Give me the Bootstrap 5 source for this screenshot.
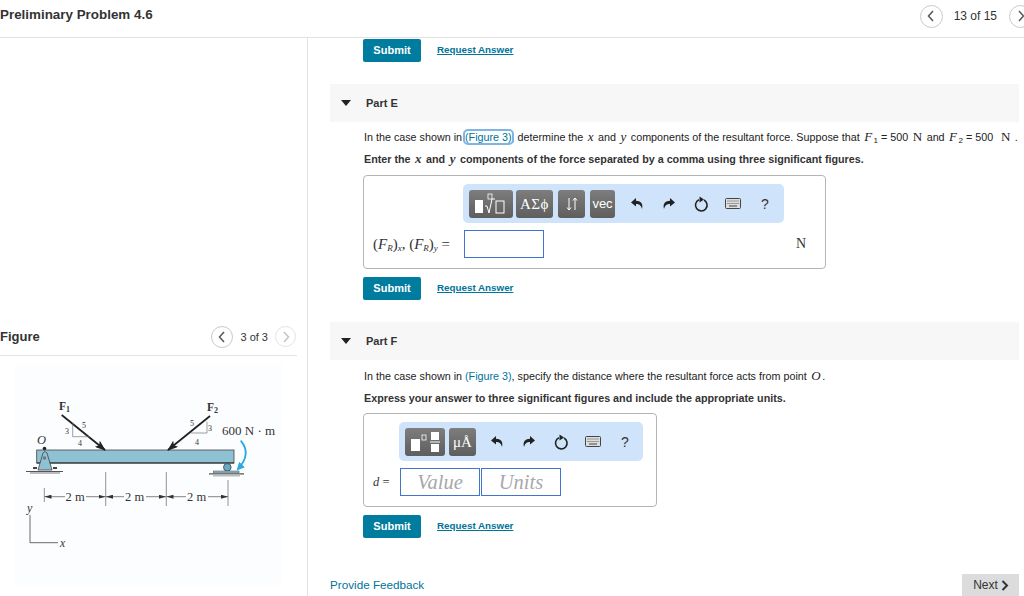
<!DOCTYPE html>
<html lang="en"><head><meta charset="utf-8"><title>Preliminary Problem 4.6</title>
<link href="https://cdn.jsdelivr.net/npm/bootstrap@5.3.0/dist/css/bootstrap.min.css" rel="stylesheet">
<script src="https://cdn.jsdelivr.net/npm/bootstrap@5.3.0/dist/js/bootstrap.bundle.min.js"></script>
<style>
html,body{height:596px;overflow:hidden;background:#fff}
body{font-family:"Liberation Sans",Arial,sans-serif;font-size:10.75px;color:#222;line-height:14px}
.top-bar{height:38px;border-bottom:1px solid #e2e2e2;padding-bottom:5px}
.top-title{font-size:13.4px;font-weight:700;color:#333;margin:0 0 2px}
.pager{font-size:12px;font-weight:400;color:#333}
.fig-head .pager{font-size:11px}
.pg-btn{width:23px;height:23px;border:1px solid #c9c9c9;border-radius:50%;background:#fff;padding:0;display:inline-flex;align-items:center;justify-content:center;flex:none}
.pg-btn svg{width:8px;height:12px;fill:none;stroke:#555;stroke-width:1.5}
.pg-btn.off svg{stroke:#c4c4c4}.pg-btn.off{border-color:#e3e3e3}
.page-body{height:558px}
.fig-col{width:308px;border-right:1px solid #dfe3ea;padding-bottom:11px}
.fig-head{height:38px;margin-right:10px;border-bottom:1px solid #e2e2e2;font-size:13px;font-weight:700;color:#333}
.fig-pic{width:267px;height:220px;margin:9px 0 0 15px;background:#fcfdfe;display:block}
.fig-pic text{font-family:"Liberation Serif",serif;fill:#333}
.work-col{padding:1px 5px 0 22px;min-width:0;position:relative}
.act-row{padding-left:33px;gap:16px;height:23px}
.sub-btn{background:#007c9e;color:#fff;border:0;border-radius:2px;font-size:11px;font-weight:700;width:58px;height:23px;padding:0;line-height:23px}
.req-link{color:#00749a;font-size:9.8px;font-weight:700;text-decoration:underline;margin-top:-2px}
.part-bar{height:38px;background:#f7f7f7;font-size:11px;font-weight:700;color:#333;margin-top:22px;padding-left:11px;gap:15px}
.tri{width:0;height:0;border-left:5px solid transparent;border-right:5px solid transparent;border-top:6px solid #222}
.prompt{padding-left:34px;margin-top:8px;white-space:nowrap}
.prompt p{margin:0 0 8px}
.prompt b{color:#333}
.prompt-f{padding-top:1px}
.fig-link{color:#00749a}
.fig-link.on{outline:2px solid #7db5e6;border-radius:3px}
.mth{font-family:"Liberation Serif",serif;font-size:13px;padding:0 1.5px}
.ans-box{margin:9px 0 8px 33px;border:1px solid #b5b5b5;border-radius:4px;height:94px;background:#fff;position:relative}
.ans-e{width:463px;padding:8px 0 0 99px}
.ans-f{width:294px;padding:8px 0 0 35px;margin-top:8px}
.tool-bar{height:39px;background:#cfe4fb;border-radius:5px;padding:5px 0 5px 6px;gap:3px}
.ans-e .tool-bar{width:321px}
.ans-f .tool-bar{width:244px}
.tl-btn{height:28px;border:0;padding:0;border-radius:3px;background:linear-gradient(#7d7d7d,#5e5e5e);color:#fff;font-size:13px;display:flex;align-items:center;justify-content:center;gap:2px;flex:none}
.serif-t{font-family:"Liberation Serif",serif;font-size:15px;letter-spacing:.5px}
.tl-ico{width:29px;display:flex;justify-content:center;align-items:center;color:#333;font-size:14px;flex:none}
.tl-ico svg{display:block}
.ico-first{margin-left:4.5px}
.ans-f .ico-first{margin-left:3.500px}
.input-row{margin-top:7px;height:28px}
.ans-e .input-row{margin-left:-90px}
.ans-f .input-row{margin-left:-26px}
.eq-label{font-family:"Liberation Serif",serif;font-size:15px;color:#333;white-space:nowrap}
.eq-label sub{font-size:9px;line-height:0}
.unit-n{margin-left:252px;font-size:14px}
.d-label{width:27px;font-size:12.5px}
.blank{height:28px;width:80px;border:1px solid #3f74cf;background:#fff;font-family:"Liberation Serif",serif;font-style:italic;font-size:20.5px;color:#a8a8a8;display:flex;align-items:center;justify-content:center}
.foot-row{position:absolute;left:22px;right:5px;bottom:0;height:22px}
.feed-link{color:#00749a;font-size:11.7px;padding-bottom:1px}
.next-btn{width:57px;height:22px;background:#dcdcdc;color:#333;font-size:12px;border:0;padding:0 0 0 1px;border-radius:0;display:flex;align-items:center;justify-content:center;gap:3px}
</style></head>
<body>
<header class="top-bar d-flex align-items-center justify-content-between">
  <h1 class="top-title">Preliminary Problem 4.6</h1>
  <div class="pager d-flex align-items-center" style="margin-right:-8px">
    <button class="pg-btn" style="margin-right:11px"><svg viewBox="0 0 8 12"><path d="M6 1 1.5 6 6 11"/></svg></button>
    <span>13 of 15</span>
    <button class="pg-btn" style="margin-left:12px"><svg viewBox="0 0 8 12"><path d="M2 1 6.5 6 2 11"/></svg></button>
  </div>
</header>
<div class="page-body d-flex">
  <aside class="fig-col d-flex flex-column justify-content-end flex-shrink-0">
    <div class="fig-head d-flex align-items-center justify-content-between">
      <span>Figure</span>
      <div class="pager d-flex align-items-center" style="margin-right:1px">
        <button class="pg-btn" style="width:22px;height:22px;margin-right:7px"><svg viewBox="0 0 8 12"><path d="M6 1 1.5 6 6 11"/></svg></button>
        <span>3 of 3</span>
        <button class="pg-btn off" style="width:21px;height:21px;margin-left:7px"><svg viewBox="0 0 8 12"><path d="M2 1 6.5 6 2 11"/></svg></button>
      </div>
    </div>
    <svg class="fig-pic" viewBox="15 45 267 220" aria-label="Beam diagram">
      <defs><marker id="ah" markerUnits="userSpaceOnUse" markerWidth="11" markerHeight="8" refX="10" refY="4" orient="auto"><path d="M0 0 11 4 0 8 2.500 4z" fill="#222"/></marker>
      <marker id="dm" markerUnits="userSpaceOnUse" markerWidth="7" markerHeight="4" refX="7" refY="2" orient="auto"><path d="M0 0 7 2 0 4z" fill="#333"/></marker>
      <marker id="bl" markerUnits="userSpaceOnUse" markerWidth="8" markerHeight="8" refX="6" refY="4" orient="auto"><path d="M0 0 8 4 0 8z" fill="#29abe2"/></marker></defs>
      <rect x="36.7" y="130" width="197.3" height="13" fill="#8fc1d4" stroke="#444" stroke-width=".8"/>
      <path d="M36.700 143H234" stroke="#222" stroke-width="1.200"/>
      <path d="M38 150 43 133Q45 130 47 133L52 150Z" fill="#8fc1d4" stroke="#444" stroke-width=".8"/>
      <circle cx="44.500" cy="138" r="1.800" fill="#777"/><circle cx="44.500" cy="128.500" r="1.800" fill="#222"/>
      <path d="M26 151.500H63" stroke="#555" stroke-width="1.200"/><path d="M33 148h4M53 148h4" stroke="#444" stroke-width="2"/>
      <path d="M30 153H60" stroke="#bbb" stroke-width="2"/>
      <circle cx="227.300" cy="147.300" r="3.800" fill="#6ba9c4" stroke="#333" stroke-width=".7"/>
      <rect x="213.500" y="151" width="25.500" height="2" fill="#8fc1d4" stroke="#444" stroke-width=".5"/>
      <path d="M209 153.800H244" stroke="#555" stroke-width="1.200"/><path d="M213 155.500H240" stroke="#bbb" stroke-width="2"/>
      <path d="M61.700 95 105 130" stroke="#222" stroke-width="1.800" marker-end="url(#ah)"/>
      <path d="M210 96 168 130" stroke="#222" stroke-width="1.800" marker-end="url(#ah)"/>
      <path d="M72.700 103.300V116.700H90M190.700 113H207V101.700" fill="none" stroke="#777" stroke-width=".7"/>
      <path d="M240.700 120.700Q252 134 238 149" fill="none" stroke="#29abe2" stroke-width="1.800" marker-end="url(#bl)"/>
      <path d="M44.300 168V182M105.700 152V186M166.300 152V186M228 160V186" stroke="#666" stroke-width=".7"/>
      <path d="M65 176.700H44.500" stroke="#333" stroke-width=".6" marker-end="url(#dm)"/><path d="M86 176.700H105.500" stroke="#333" stroke-width=".6" marker-end="url(#dm)"/>
      <path d="M124 176.700H106" stroke="#333" stroke-width=".6" marker-end="url(#dm)"/><path d="M146 176.700H166" stroke="#333" stroke-width=".6" marker-end="url(#dm)"/>
      <path d="M186 176.700H166.500" stroke="#333" stroke-width=".6" marker-end="url(#dm)"/><path d="M208 176.700H228" stroke="#333" stroke-width=".6" marker-end="url(#dm)"/>
      <path d="M30 195V222.700H58" fill="none" stroke="#444" stroke-width=".8"/>
      <text x="59" y="90" font-size="11.500" font-weight="700">F<tspan font-size="8" dy="2">1</tspan></text>
      <text x="207" y="91" font-size="11.500" font-weight="700">F<tspan font-size="8" dy="2">2</tspan></text>
      <g font-size="8"><text x="65" y="114">3</text><text x="82" y="108">5</text><text x="78" y="126">4</text><text x="190" y="106">5</text><text x="208" y="111">3</text><text x="195" y="125">4</text></g>
      <text x="222" y="115" font-size="13">600 N · m</text>
      <text x="37" y="124" font-size="12.500" font-style="italic">O</text>
      <g font-size="12.500"><text x="65.500" y="181">2 m</text><text x="125" y="181">2 m</text><text x="187" y="181">2 m</text></g>
      <text x="27" y="192" font-size="12" font-style="italic">y</text><text x="60" y="227" font-size="11.500" font-style="italic">x</text>
    </svg>
  </aside>
  <main class="work-col flex-grow-1">
    <div class="act-row d-flex align-items-center"><button class="sub-btn">Submit</button><a class="req-link" href="#">Request Answer</a></div>
    <div class="part-bar d-flex align-items-center"><span class="tri"></span><span>Part E</span></div>
    <div class="prompt">
      <p>In the case shown in <a class="fig-link on text-decoration-none" href="#">(Figure 3)</a>, determine the <i class="mth">x</i> and <i class="mth">y</i> components of the resultant force. Suppose that <i class="mth">F</i><sub>1</sub> = 500 <span class="mth">N</span> and <i class="mth">F</i><sub>2</sub> = 500 <span class="mth">&nbsp;N</span> .</p>
      <p><b>Enter the <i class="mth">x</i> and <i class="mth">y</i> components of the force separated by a comma using three significant figures.</b></p>
    </div>
    <div class="ans-box ans-e">
      <div class="tool-bar d-flex align-items-center">
        <button class="tl-btn" style="width:44px"><svg width="38" height="22" viewBox="0 0 38 22"><rect x="3" y="7" width="8" height="13" fill="#fff"/><path d="M13 13l2 0 2 7 3-14h3" fill="none" stroke="#fff"/><rect x="16" y="1" width="4" height="5" fill="none" stroke="#fff" stroke-width=".8"/><rect x="24" y="8" width="8" height="12" fill="none" stroke="#fff"/></svg></button>
        <button class="tl-btn serif-t" style="width:37px">ΑΣϕ</button>
        <button class="tl-btn" style="width:27px;margin-left:2px"><svg width="14" height="14" viewBox="0 0 14 14" fill="none" stroke="#fff"><path d="M4 1V13M2 10.500 4 13 6 10.500M10 13V1M8 3.500 10 1 12 3.500"/></svg></button>
        <button class="tl-btn" style="width:25px;margin-left:2px">vec</button>
        <span class="tl-ico ico-first"><svg width="14" height="13" viewBox="0 0 14 13"><path d="M6 1 1 5.500 6 9.500V7C9 7 11 8 12 12 13.500 6.500 10.500 3.800 6 3.800Z" fill="#222"/></svg></span>
        <span class="tl-ico"><svg width="14" height="13" viewBox="0 0 14 13"><path d="M8 1 13 5.500 8 9.500V7C5 7 3 8 2 12 .5 6.500 3.500 3.800 8 3.800Z" fill="#222"/></svg></span>
        <span class="tl-ico"><svg width="15" height="16" viewBox="0 0 15 16" fill="none" stroke="#222" stroke-width="1.600"><path d="M5 3.800A5.800 5.800 0 1 0 10 4"/><path d="M4.500 0.500V6.500L9 3.500Z" fill="#222" stroke="none" transform="translate(1 0)"/></svg></span>
        <span class="tl-ico"><svg width="16" height="11" viewBox="0 0 16 11"><rect x=".5" y=".5" width="15" height="10" rx="1" fill="#ddd" stroke="#444"/><path d="M2.500 3h11M2.500 5.500h11" stroke="#555" stroke-dasharray="1 1"/><path d="M4 8h8" stroke="#444"/></svg></span>
        <span class="tl-ico">?</span>
      </div>
      <div class="input-row d-flex align-items-center">
        <span class="eq-label" style="width:91px">(<i>F</i><sub><i>R</i></sub>)<sub><i>x</i></sub>, (<i>F</i><sub><i>R</i></sub>)<sub><i>y</i></sub> =</span>
        <span class="blank"></span>
        <span class="eq-label unit-n">N</span>
      </div>
    </div>
    <div class="act-row d-flex align-items-center"><button class="sub-btn">Submit</button><a class="req-link" href="#">Request Answer</a></div>
    <div class="part-bar d-flex align-items-center"><span class="tri"></span><span>Part F</span></div>
    <div class="prompt prompt-f">
      <p>In the case shown in <a class="fig-link text-decoration-none" href="#">(Figure 3)</a>, specify the distance where the resultant force acts from point <i class="mth">O</i>.</p>
      <p><b>Express your answer to three significant figures and include the appropriate units.</b></p>
    </div>
    <div class="ans-box ans-f">
      <div class="tool-bar d-flex align-items-center">
        <button class="tl-btn" style="width:40px"><svg width="34" height="24" viewBox="0 0 34 24"><rect x="3" y="9" width="9" height="12" fill="#fff"/><rect x="14" y="5" width="4" height="5" fill="none" stroke="#fff" stroke-width=".8"/><rect x="23" y="2" width="8" height="8" fill="#fff"/><path d="M22 12h10" stroke="#fff"/><rect x="23" y="14" width="8" height="8" fill="#fff"/></svg></button>
        <button class="tl-btn serif-t" style="width:27px;font-size:15px;letter-spacing:0;margin-left:1px">μÅ</button>
        <span class="tl-ico ico-first"><svg width="14" height="13" viewBox="0 0 14 13"><path d="M6 1 1 5.500 6 9.500V7C9 7 11 8 12 12 13.500 6.500 10.500 3.800 6 3.800Z" fill="#222"/></svg></span>
        <span class="tl-ico"><svg width="14" height="13" viewBox="0 0 14 13"><path d="M8 1 13 5.500 8 9.500V7C5 7 3 8 2 12 .5 6.500 3.500 3.800 8 3.800Z" fill="#222"/></svg></span>
        <span class="tl-ico"><svg width="15" height="16" viewBox="0 0 15 16" fill="none" stroke="#222" stroke-width="1.600"><path d="M5 3.800A5.800 5.800 0 1 0 10 4"/><path d="M4.500 0.500V6.500L9 3.500Z" fill="#222" stroke="none" transform="translate(1 0)"/></svg></span>
        <span class="tl-ico"><svg width="16" height="11" viewBox="0 0 16 11"><rect x=".5" y=".5" width="15" height="10" rx="1" fill="#ddd" stroke="#444"/><path d="M2.500 3h11M2.500 5.500h11" stroke="#555" stroke-dasharray="1 1"/><path d="M4 8h8" stroke="#444"/></svg></span>
        <span class="tl-ico">?</span>
      </div>
      <div class="input-row d-flex align-items-center">
        <span class="eq-label d-label"><i>d</i> =</span>
        <span class="blank">Value</span>
        <span class="blank" style="margin-left:1px">Units</span>
      </div>
    </div>
    <div class="act-row d-flex align-items-center"><button class="sub-btn">Submit</button><a class="req-link" href="#">Request Answer</a></div>
    <div class="foot-row d-flex justify-content-between align-items-center">
      <a class="feed-link text-decoration-none" href="#">Provide Feedback</a>
      <button class="next-btn">Next <svg width="8" height="11" viewBox="0 0 8 11" fill="none" stroke="#333" stroke-width="2"><path d="M1.500 1 6 5.500 1.500 10"/></svg></button>
    </div>
  </main>
</div>
</body></html>
